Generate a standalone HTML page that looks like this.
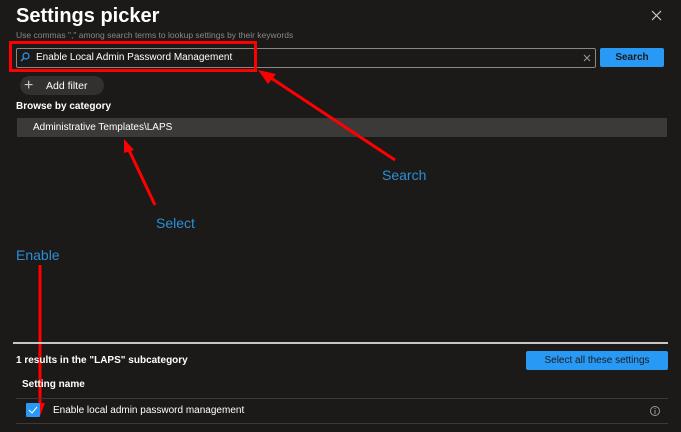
<!DOCTYPE html>
<html><head><style>
body{margin:0;width:681px;height:432px;background:#1b1a19;font-family:"Liberation Sans",sans-serif;position:relative;overflow:hidden;color:#fff}
.a{position:absolute;white-space:nowrap}
</style></head><body>
<div class="a" style="left:16px;top:5px;font-size:20px;font-weight:bold;color:#fff">Settings picker</div>
<div class="a" style="left:16px;top:30px;font-size:8.5px;color:#8a8886">Use commas "," among search terms to lookup settings by their keywords</div>
<svg class="a" style="left:651px;top:10px" width="11" height="11"><path d="M1 1L10 10M10 1L1 10" stroke="#ccc" stroke-width="1.2"/></svg>
<div class="a" style="left:16px;top:48px;width:578px;height:18px;border:1px solid #8a8886;border-radius:2px"></div>
<svg class="a" style="left:20px;top:52px" width="10" height="10"><circle cx="6" cy="4" r="3" stroke="#2899f5" fill="none" stroke-width="1.2"/><line x1="4" y1="6" x2="1" y2="9" stroke="#2899f5" stroke-width="1.3"/></svg>
<div class="a" style="left:36px;top:52px;font-size:10px;color:#fff">Enable Local Admin Password Management</div>
<svg class="a" style="left:583px;top:54px" width="8" height="8"><path d="M1 1L7 7M7 1L1 7" stroke="#999" stroke-width="1"/></svg>
<div class="a" style="left:600px;top:48px;width:64px;height:19px;background:#2899f5;border-radius:2px;color:#1b1a19;font-size:10px;text-align:center;line-height:19px;font-weight:bold">Search</div>
<div class="a" style="left:9px;top:41px;width:242px;height:25px;border:3px solid #f00"></div>
<div class="a" style="left:20px;top:76px;width:84px;height:19px;background:#323130;border-radius:10px"></div>
<div class="a" style="left:24px;top:76px;font-size:16px;color:#ccc;line-height:19px">+</div>
<div class="a" style="left:46px;top:80px;font-size:10.5px;color:#fff">Add filter</div>
<div class="a" style="left:16px;top:101px;font-size:10px;font-weight:bold">Browse by category</div>
<div class="a" style="left:17px;top:118px;width:650px;height:19px;background:#3b3a39"></div>
<div class="a" style="left:33px;top:122px;font-size:10px">Administrative Templates\LAPS</div>
<div class="a" style="left:382px;top:167px;font-size:14px;color:#2b8fd6">Search</div>
<div class="a" style="left:156px;top:215px;font-size:14px;color:#2b8fd6">Select</div>
<div class="a" style="left:16px;top:247px;font-size:14px;color:#2b8fd6">Enable</div>
<svg class="a" style="left:0;top:0" width="681" height="432">
<line x1="395" y1="160" x2="268" y2="76" stroke="#f00" stroke-width="3"/>
<polygon points="258,70 276,74 268,84" fill="#f00"/>
<line x1="155" y1="205" x2="128" y2="148" stroke="#f00" stroke-width="3"/>
<polygon points="124,139 134,150 124,153" fill="#f00"/>
<line x1="40" y1="265" x2="40" y2="405" stroke="#f00" stroke-width="3"/>
<polygon points="35,403 45,403 40,416" fill="#f00"/>
</svg>
<div class="a" style="left:13px;top:342px;width:655px;height:2px;background:#c8c6c4"></div>
<div class="a" style="left:16px;top:355px;font-size:10px;font-weight:bold">1 results in the "LAPS" subcategory</div>
<div class="a" style="left:526px;top:351px;width:142px;height:19px;background:#2899f5;border-radius:2px;color:#1b1a19;font-size:10px;text-align:center;line-height:19px">Select all these settings</div>
<div class="a" style="left:22px;top:379px;font-size:10px;font-weight:bold">Setting name</div>
<div class="a" style="left:16px;top:398px;width:652px;height:1px;background:#3b3a39"></div>
<div class="a" style="left:26px;top:403px;width:14px;height:14px;background:#2899f5;border-radius:1px"></div>
<svg class="a" style="left:26px;top:403px" width="14" height="14"><polyline points="3,7 6,10 11,4" stroke="#fff" fill="none" stroke-width="1"/></svg>
<div class="a" style="left:53px;top:405px;font-size:10px">Enable local admin password management</div>
<svg class="a" style="left:649px;top:405px" width="12" height="12"><circle cx="6" cy="6" r="4.5" stroke="#999" fill="none"/><line x1="6" y1="5" x2="6" y2="9" stroke="#999"/><circle cx="6" cy="3.5" r=".6" fill="#999"/></svg>
<div class="a" style="left:16px;top:423px;width:652px;height:1px;background:#3b3a39"></div>
</body></html>
